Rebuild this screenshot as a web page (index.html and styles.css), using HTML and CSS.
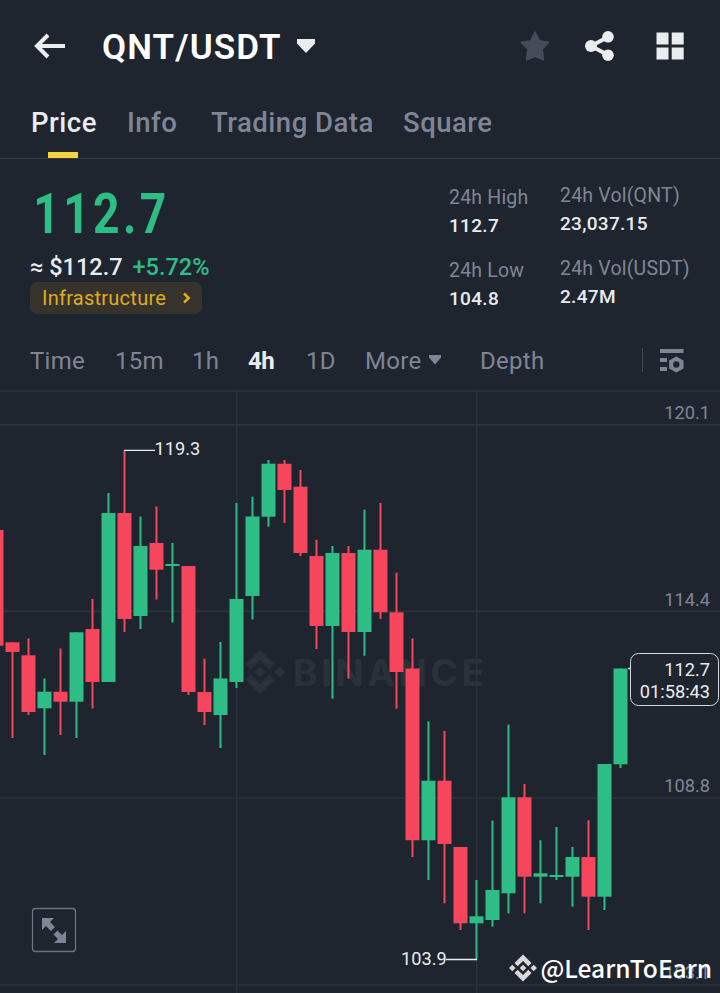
FILE: index.html
```html
<!DOCTYPE html>
<html lang="en">
<head>
<meta charset="UTF-8">
<meta name="viewport" content="width=device-width, initial-scale=1.0">
<title>QNT/USDT</title>
<link rel="stylesheet" href="styles.css">
</head>
<body>
  <div class="header">
    <svg class="back" width="32" height="26" viewBox="0 0 32 26"><path d="M14 2 3 13l11 11M3 13h28" fill="none" stroke="#eaecef" stroke-width="4"/></svg>
    <h1 class="pair">QNT/USDT</h1>
    <svg class="pair-arrow" width="20" height="16" viewBox="0 0 20 16"><path d="M1 1h18v4.500L10 15 1 5.500z" fill="#eaecef"/></svg>
    <div class="actions">
      <svg width="32" height="32" viewBox="0 0 32 32"><path d="M16 2.500l4.200 8.500 9.300 1.400-6.700 6.600 1.500 10.500L16 26l-8.300 3.500L9.200 19 2.500 12.400l9.300-1.400z" fill="#444c5a" stroke="#444c5a" stroke-width="2" stroke-linejoin="round"/></svg>
      <svg width="32" height="32" viewBox="0 0 32 32"><path d="M24 7 7 16l17 9" fill="none" stroke="#eaecef" stroke-width="4"/><g fill="#eaecef"><circle cx="24" cy="6.800" r="5.800"/><circle cx="7" cy="16" r="6"/><circle cx="24" cy="25.200" r="5.800"/></g></svg>
      <svg class="apps" width="32" height="32" viewBox="0 0 32 32"><path d="M2.500 2.500h12v12h-12zM17.700 2.500h12v12h-12zM2.500 17.500h12v12h-12zM17.700 17.500h12v12h-12z" fill="#eaecef"/></svg>
    </div>
  </div>

  <div class="tabs">
    <span class="tab active">Price</span>
    <span class="tab">Info</span>
    <span class="tab trading">Trading Data</span>
    <span class="tab">Square</span>
  </div>

  <div class="summary">
    <div class="summary-left">
      <div class="price">112.7</div>
      <div class="change"><span class="usd">≈ $112.7</span><span class="percent">+5.72%</span></div>
      <div class="tag">Infrastructure
        <svg width="10" height="14" viewBox="0 0 10 14"><path d="M2 2.500 6.700 7 2 11.500" fill="none" stroke="#e0ac1c" stroke-width="2.500"/></svg>
      </div>
    </div>
    <div class="stats">
      <div class="stat"><div class="label">24h High</div><div class="value">112.7</div></div>
      <div class="stat"><div class="label">24h Low</div><div class="value">104.8</div></div>
    </div>
    <div class="stats volume">
      <div class="stat"><div class="label">24h Vol(QNT)</div><div class="value">23,037.15</div></div>
      <div class="stat"><div class="label">24h Vol(USDT)</div><div class="value">2.47M</div></div>
    </div>
  </div>

  <div class="intervals">
    <span>Time</span>
    <span>15m</span>
    <span>1h</span>
    <span class="selected">4h</span>
    <span>1D</span>
    <span class="more">More <svg width="14" height="12" viewBox="0 0 14 12"><path d="M1 1h12v2.500L7 10.500 1 3.500z" fill="#7f8596"/></svg></span>
    <span>Depth</span>
    <span class="settings"><svg width="26" height="26" viewBox="0 0 26 26"><g fill="#7f8596"><path d="M1 1h23.500v4H1zM1 10h7v4H1zM1 19h7v4H1z"/><path fill-rule="evenodd" d="M17.300 8.500l7.200 4v8l-7.200 4-7.200-4v-8zM17.300 13.300a3.200 3.200 0 1 0 0 6.400 3.200 3.200 0 0 0 0-6.400z"/></g></svg></span>
  </div>

  <div class="chart">
    <svg class="plot" width="720" height="603" viewBox="0 390 720 603">
      <path class="grid" d="M0 391H720M0 424.800H720M0 611.300H720M0 798H720M0 985H720M236.500 391V993M476.500 391V993"/>
      <g class="brand">
        <path d="M246 664 260 650l14 14-5 5-9-9-9 9zM246 680l5-5 9 9 9-9 5 5-14 14zM260 666.500l5.500 5.500-5.500 5.500-5.500-5.500zM279.500 666.500l5.500 5.500-5.500 5.500-5.500-5.500z"/>
        <text x="293" y="685.500">BINANCE</text>
      </g>
      <g id="candles"></g>
      <g class="axis">
        <text x="710" y="419">120.1</text>
        <text x="710" y="606">114.4</text>
        <text x="710" y="792">108.8</text>
        <text x="710" y="979">103.1</text>
      </g>
      <path class="pointer" d="M124 450.300H155M446 959.500H477M628 668.500h3"/>
      <text class="extreme" x="154.500" y="455">119.3</text>
      <text class="extreme" x="401" y="965">103.9</text>
      <rect class="current" x="630.500" y="653.500" width="88" height="52" rx="8"/>
      <g class="current-text">
        <text x="710" y="676">112.7</text>
        <text x="710" y="698">01:58:43</text>
      </g>
      <g class="expand">
        <rect x="32.500" y="908.500" width="43" height="43" rx="3"/>
        <path d="M42 918h12l-4 4 5 5-4 4-5-5-4 4zM66 943H54l4-4-4.500-4.500 4-4L62 935l4-4z"/>
      </g>
    </svg>
    <div class="author">
      <svg width="28" height="28" viewBox="0 0 28 28"><path d="M5.500 9 14 .5 22.500 9l-3.200 3.200L14 6.900l-5.300 5.300zM5.500 19l3.200-3.200 5.300 5.300 5.300-5.300 3.200 3.200L14 27.500zM14 10.700l3.300 3.300-3.300 3.300-3.300-3.300zM3.300 10.700 6.600 14l-3.300 3.300L0 14zM24.700 10.700 28 14l-3.300 3.300-3.300-3.300z" fill="#d9d9d9"/></svg>
      <span>@LearnToEarn</span>
    </div>
  </div>
  <script src="chart.js"></script>
</body>
</html>
```

FILE: styles.css
```css
* {
  box-sizing: border-box;
}

body {
  margin: 0;
  width: 720px;
  height: 993px;
  overflow: hidden;
  background: #1f252f;
  color: #eaecef;
  font-family: Roboto, "Noto Sans", sans-serif;
}

svg {
  display: block;
  flex: none;
}

.header {
  display: flex;
  align-items: center;
  height: 92px;
  padding: 0 34px 0 34px;
}

.pair {
  margin: 4px 0 0 36px;
  width: 194px;
  font-size: 35px;
  font-weight: 600;
  letter-spacing: 1.1px;
  line-height: 46px;
  white-space: nowrap;
  color: #fff;
}

.actions {
  display: flex;
  gap: 33px;
  margin-left: auto;
}

.apps {
  margin-left: 5px;
}

.tabs {
  display: grid;
  grid-template-columns: 96px 84px 192px auto;
  height: 67px;
  padding-left: 31px;
  border-bottom: 1px solid #333a45;
  font-size: 27.5px;
  font-weight: 500;
  letter-spacing: 0.5px;
  line-height: 61px;
  color: #7f8596;
  white-space: nowrap;
}

.tab.active {
  position: relative;
  color: #eaecef;
}

.tab.active::after {
  content: "";
  position: absolute;
  left: 17px;
  bottom: 0;
  width: 30px;
  height: 6px;
  background: #f5d33f;
}

.summary {
  display: flex;
  height: 169px;
  padding: 24px 0 0 30px;
}

.summary-left {
  width: 419px;
}

/* narrow digits for the big quote */
.price {
  height: 66px;
  padding-left: 3px;
  font-size: 55px;
  font-weight: 700;
  line-height: 62px;
  letter-spacing: 4px;
  color: #2ebd85;
  transform: scaleX(0.84);
  transform-origin: 5px 0;
}

.change {
  display: flex;
  gap: 10px;
  height: 33px;
  font-size: 23.5px;
  font-weight: 500;
  line-height: 37px;
}

.percent {
  color: #2ebd85;
}

.tag {
  display: flex;
  align-items: center;
  justify-content: space-between;
  width: 172px;
  height: 32px;
  padding: 0 10px 0 12px;
  border-radius: 7px;
  background: #35332c;
  font-size: 20px;
  letter-spacing: 0.25px;
  color: #e0ac1c;
}

.stats {
  width: 111px;
  padding-top: 2px;
  white-space: nowrap;
}

.volume {
  padding-top: 0;
}

.stat {
  height: 72.5px;
}

.label {
  height: 27px;
  font-size: 19.5px;
  letter-spacing: 0.2px;
  line-height: 26px;
  color: #7f8596;
}

.value {
  font-size: 19px;
  font-weight: 500;
  letter-spacing: 0.3px;
  line-height: 28px;
}

.intervals {
  display: grid;
  grid-template-columns: 85px 77px 56px 58px 59px 115px 162px auto;
  align-items: center;
  height: 62px;
  padding: 4px 0 0 30px;
  font-size: 24px;
  letter-spacing: 0.3px;
  line-height: 30px;
  color: #7f8596;
  white-space: nowrap;
}

.selected {
  font-weight: 700;
  letter-spacing: -0.5px;
  color: #eaecef;
}

.more {
  display: flex;
  align-items: center;
  gap: 7px;
}

.more svg {
  margin-top: -3px;
}

.settings {
  height: 24px;
  margin-top: -2px;
  padding-left: 16px;
  border-left: 1px solid #404653;
}

.chart {
  position: relative;
  height: 603px;
}

.grid {
  fill: none;
  stroke: #2b323c;
  stroke-width: 1.5;
}

.brand {
  fill: #2b313b;
  font-family: Inter, sans-serif;
  font-size: 37px;
  font-weight: 700;
  letter-spacing: 3.7px;
}

.up {
  fill: #2ebd85;
}

.down {
  fill: #f6465d;
}

.axis,
.extreme,
.current-text {
  font-size: 18.2px;
}

.axis {
  fill: #7f8596;
  text-anchor: end;
}

.extreme {
  fill: #eaecef;
}

.pointer {
  fill: none;
  stroke: #eaecef;
  stroke-width: 1.3;
}

.current {
  fill: #1f252f;
  stroke: #d5d8de;
}

.current-text {
  fill: #eaecef;
  text-anchor: end;
}

.expand rect {
  fill: none;
  stroke: #6c7280;
  stroke-width: 1.3;
}

.expand path {
  fill: #7f8596;
}

/* author badge lies over the corner of the chart */
.author {
  position: absolute;
  right: 8px;
  bottom: 7px;
  display: flex;
  align-items: center;
  gap: 3px;
  font-family: "Noto Sans CJK SC", sans-serif;
  font-size: 24.5px;
  font-weight: 500;
  line-height: 36px;
  color: #fff;
}
```

FILE: chart.js
```js
// [direction, high, body top, body bottom, low]
const candles = [
  ['down', 530, 530, 645.7, 645.7],
  ['down', 642.3, 642.3, 652, 738],
  ['down', 638.5, 655.3, 712, 715],
  ['up', 678.5, 691.7, 708.3, 755],
  ['down', 648.5, 691.7, 701.7, 735],
  ['up', 632.3, 632.3, 701.7, 738],
  ['down', 599, 629, 682, 708.5],
  ['up', 493, 513, 682, 682],
  ['down', 450.3, 513, 619, 632],
  ['up', 516.5, 546, 616, 629],
  ['down', 506.5, 543, 569.7, 599.5],
  ['up', 543, 564, 566, 622.5],
  ['down', 566, 566, 692, 695],
  ['down', 658.7, 692, 712, 725],
  ['up', 642, 678.5, 715, 748],
  ['up', 503, 599, 682, 688],
  ['up', 496.7, 516.5, 596, 619.5],
  ['up', 460, 463.7, 516.7, 526.7],
  ['down', 460, 463.7, 490, 523],
  ['down', 470, 486.7, 553, 556],
  ['down', 539.7, 556, 626, 649],
  ['up', 546, 553, 626, 698.7],
  ['down', 546, 553, 632, 678.7],
  ['up', 509.7, 549.7, 632, 655.7],
  ['down', 503, 549.7, 612.3, 619],
  ['down', 572.7, 612.3, 672, 708.7],
  ['down', 638.5, 668.5, 840.3, 857],
  ['up', 721.3, 780.7, 840.3, 880],
  ['down', 731, 780.7, 844, 903.3],
  ['down', 847, 847, 923.3, 930],
  ['up', 880, 916.3, 923.3, 959.7],
  ['up', 820.5, 890, 920, 926.7],
  ['up', 724.7, 797.3, 893.3, 913.3],
  ['down', 784, 797.3, 876.7, 913.3],
  ['up', 840.3, 873.3, 876.7, 903.3],
  ['up', 827, 875, 877, 880],
  ['up', 847, 857, 876.7, 906.7],
  ['down', 820.3, 857, 896.7, 930],
  ['up', 764, 764, 896.7, 910],
  ['up', 668.5, 668.5, 764.3, 768]
];

const group = document.getElementById('candles');

function addRect(cls, x, y, width, height) {
  const rect = document.createElementNS('http://www.w3.org/2000/svg', 'rect');
  rect.setAttribute('class', cls);
  rect.setAttribute('x', x);
  rect.setAttribute('y', y);
  rect.setAttribute('width', width);
  rect.setAttribute('height', height);
  group.appendChild(rect);
}

candles.forEach(([cls, high, top, bottom, low], i) => {
  const x = -3.5 + i * 16;
  addRect(cls, x - 1, high, 2, low - high);
  addRect(cls, x - 7, top, 14, bottom - top);
});
```
